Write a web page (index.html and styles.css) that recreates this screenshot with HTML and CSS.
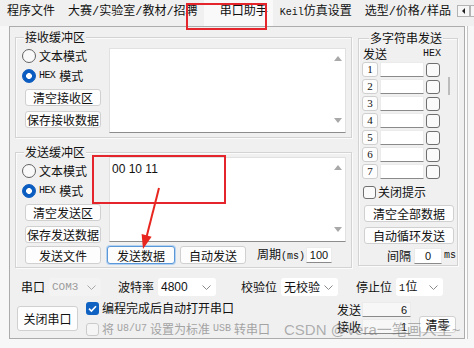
FILE: index.html
```html
<!DOCTYPE html>
<html lang="zh-CN">
  <head>
    <meta charset="UTF-8" />
    <meta name="viewport" content="width=device-width, initial-scale=1.0" />
    <title>串口助手</title>
    <link rel="stylesheet" href="styles.css">
  </head>
  <body>
    <div class="tabs">
      <span class="tab">程序文件</span>
      <span class="tab">大赛/实验室/教材/招聘</span>
      <span class="tab tab--active">串口助手</span>
      <span class="tab"><span class="lat">Keil</span>仿真设置</span>
      <span class="tab">选型/价格/样品</span>
      <span class="tab-scroll">
        <span class="tab-scroll__btn"><i class="tri tri--left"></i></span>
        <span class="tab-scroll__btn"><i class="tri tri--right"></i></span>
      </span>
    </div>

    <div class="panel">
      <div class="main">
        <div class="buffers">
          <!-- receive buffer -->
          <div class="group buffer">
            <div class="buffer__body">
              <div class="buffer__side">
                <span class="group__title">接收缓冲区</span>
                <label class="radio"><span class="radio__dot"></span>文本模式</label>
                <label class="radio radio--on"><span class="radio__dot"></span><span class="lat lat--tight">HEX</span>模式</label>
                <button class="btn btn--side">清空接收区</button>
                <button class="btn btn--side btn--gap">保存接收数据</button>
              </div>
              <div class="textbox textbox--recv">
                <div class="textbox__text"></div>
                <div class="vbar"><i class="tri tri--up"></i><i class="tri tri--down"></i></div>
              </div>
            </div>
          </div>

          <!-- send buffer -->
          <div class="group buffer buffer--send">
            <div class="buffer__body">
              <div class="buffer__side">
                <span class="group__title">发送缓冲区</span>
                <label class="radio"><span class="radio__dot"></span>文本模式</label>
                <label class="radio radio--on"><span class="radio__dot"></span><span class="lat lat--tight">HEX</span>模式</label>
                <button class="btn btn--side">清空发送区</button>
                <button class="btn btn--side btn--gap">保存发送数据</button>
              </div>
              <div class="textbox textbox--send">
                <div class="textbox__text">00 10 11</div>
                <div class="vbar"><i class="tri tri--up"></i><i class="tri tri--down"></i></div>
              </div>
            </div>
            <div class="send-row">
              <button class="btn btn--file">发送文件</button>
              <button class="btn btn--data">发送数据</button>
              <button class="btn btn--auto">自动发送</button>
              <span class="period">周期<span class="lat">(ms)</span></span>
              <span class="field field--period">100</span>
            </div>
          </div>
        </div>

        <!-- multi string -->
        <div class="group multi">
          <span class="group__title">多字符串发送</span>
          <div class="multi-head"><span>发送</span><span class="lat">HEX</span></div>
          <div class="multi-list">
            <div class="multi-rows">
              <div class="multi-row"><span class="num">1</span><span class="field field--str"></span><span class="check"></span></div>
              <div class="multi-row"><span class="num">2</span><span class="field field--str"></span><span class="check"></span></div>
              <div class="multi-row"><span class="num">3</span><span class="field field--str"></span><span class="check"></span></div>
              <div class="multi-row"><span class="num">4</span><span class="field field--str"></span><span class="check"></span></div>
              <div class="multi-row"><span class="num">5</span><span class="field field--str"></span><span class="check"></span></div>
              <div class="multi-row"><span class="num">6</span><span class="field field--str"></span><span class="check"></span></div>
              <div class="multi-row"><span class="num">7</span><span class="field field--str"></span><span class="check"></span></div>
            </div>
            <div class="vscroll"><span class="vscroll__thumb"></span></div>
          </div>
          <label class="checkline"><span class="check check--small"></span>关闭提示</label>
          <button class="btn btn--wide">清空全部数据</button>
          <button class="btn btn--wide">自动循环发送</button>
          <div class="interval">
            <span>间隔</span>
            <span class="field field--interval">0</span>
            <span class="lat">ms</span>
          </div>
        </div>
      </div>

      <div class="serial">
        <div class="serial-row">
          <div class="pair">
            <span>串口</span>
            <span class="select select--off select--com"><span class="mono">COM3</span>
              <svg width="9" height="5" viewBox="0 0 9 5"><path d="M.5.5l4 4 4-4" stroke="#a8a8a8" fill="none"/></svg></span>
          </div>
          <div class="pair">
            <span>波特率</span>
            <span class="select select--baud"><span class="num-text">4800</span>
              <svg width="9" height="5" viewBox="0 0 9 5"><path d="M.5.5l4 4 4-4" stroke="#8a8a8a" fill="none"/></svg></span>
          </div>
          <div class="pair">
            <span>校验位</span>
            <span class="select select--parity">无校验
              <svg width="9" height="5" viewBox="0 0 9 5"><path d="M.5.5l4 4 4-4" stroke="#8a8a8a" fill="none"/></svg></span>
          </div>
          <div class="pair">
            <span>停止位</span>
            <span class="select select--stop"><span><span class="lat lat--tight">1</span>位</span>
              <svg width="9" height="5" viewBox="0 0 9 5"><path d="M.5.5l4 4 4-4" stroke="#8a8a8a" fill="none"/></svg></span>
          </div>
        </div>

        <div class="serial-ctl">
          <button class="btn btn--port">关闭串口</button>
          <div class="checks">
            <label class="checkline2">
              <span class="check check--on">
                <svg width="13" height="13" viewBox="0 0 13 13"><path d="M3 6.6l2.4 2.4L10 4.2" stroke="#fff" stroke-width="1.6" fill="none"/></svg>
              </span>编程完成后自动打开串口
            </label>
            <label class="checkline2 muted">
              <span class="check check--off"></span>将<span class="lat">U8/U7</span>设置为标准<span class="lat">USB</span>转串口
            </label>
          </div>
          <div class="counters">
            <span>发送</span><span class="field field--count">6</span>
            <span>接收</span><span class="field field--count">1</span>
          </div>
          <button class="btn btn--clear">清零</button>
        </div>
      </div>
    </div>

    <div class="watermark">CSDN @Vera一笔画人生~</div>

    <div class="callout callout--tab"></div>
    <div class="callout callout--send"></div>
    <svg class="arrow" width="474" height="348" viewBox="0 0 474 348">
      <line x1="159" y1="188" x2="146.5" y2="237" stroke="#e8261f" stroke-width="2" />
      <polygon points="143,249 141.6,234 151.6,236.8" fill="#e8261f" />
    </svg>
  </body>
</html>
```

FILE: styles.css
```css
* {
  box-sizing: border-box;
}

body {
  position: relative;
  width: 474px;
  height: 348px;
  margin: 0;
  overflow: hidden;
  background: #f7f7f7;
  color: #111;
  font-family: "Noto Sans CJK SC", sans-serif;
  font-size: 12px;
  line-height: 16px;
}

.lat {
  font-family: "Liberation Mono", monospace;
  font-size: 10px;
}

.lat--tight {
  letter-spacing: -0.6px;
  margin-right: 1px;
}

/* tabs */
.tabs {
  display: flex;
  height: 26px;
  background: #f0f0f0;
  font-family: "Liberation Mono", "Noto Sans CJK SC", monospace;
}

.tab {
  height: 24px;
  padding: 0 6px 0 7px;
  line-height: 24px;
  white-space: nowrap;
}

.tab--active {
  height: 26px;
  padding-left: 16px;
  padding-right: 5px;
  background: #f9f9f9;
}

.tab-scroll {
  display: flex;
  margin: 5px 7px 0 auto;
}

.tab-scroll__btn {
  display: flex;
  align-items: center;
  justify-content: center;
  width: 13px;
  height: 12px;
  border: 1px solid #b4b4b4;
  background: #f6f6f6;
}

.tri {
  display: block;
  width: 0;
  height: 0;
}

.tri--left {
  border-top: 3px solid transparent;
  border-bottom: 3px solid transparent;
  border-right: 3px solid #222;
}

.tri--right {
  border-top: 3px solid transparent;
  border-bottom: 3px solid transparent;
  border-left: 3px solid #222;
}

.tri--up {
  border-left: 4px solid transparent;
  border-right: 4px solid transparent;
  border-bottom: 5px solid #a9a9a9;
}

.tri--down {
  border-left: 4px solid transparent;
  border-right: 4px solid transparent;
  border-top: 5px solid #a9a9a9;
}

/* panel */
.panel {
  width: 456px;
  height: 313px;
  margin-left: 9px;
  border: 1px solid #acacac;
  background: #f0f0f0;
  box-shadow: 2px 0 0 #fcfcfc, 3px 0 0 #c8c8c8;
}

.main {
  display: grid;
  grid-template-columns: 337px 100px;
  column-gap: 6px;
  align-items: start;
  padding: 10px 0 0 5px;
}

.group {
  border: 1px solid #d3d3d3;
  box-shadow: inset 1px 1px 0 #fbfbfb, 1px 1px 0 #fbfbfb;
}

.group__title {
  align-self: flex-start;
  margin-top: -9px;
  padding: 0 1px;
  background: #f0f0f0;
  line-height: 16px;
  white-space: nowrap;
}

/* buffers */
.buffer {
  padding: 0 5px 4px 6px;
}

.buffer--send {
  margin-top: 14px;
  padding-bottom: 3px;
}

.buffer__body {
  display: flex;
  align-items: flex-start;
  gap: 7px;
}

.buffer__side {
  display: flex;
  flex-direction: column;
  align-items: flex-start;
  width: 80px;
}

.buffer__side .group__title {
  margin-left: 2px;
}

.radio {
  display: flex;
  align-items: center;
  gap: 3px;
  height: 20px;
}

.group__title + .radio {
  margin-top: 1px;
}

.radio__dot {
  width: 14px;
  height: 14px;
  border: 1px solid #626262;
  border-radius: 50%;
  background: #f9f9f9;
}

.radio--on .radio__dot {
  border-color: #0b5cc0;
  background: radial-gradient(circle, #fff 0 2.6px, #0b5cc0 3.2px);
}

.btn {
  height: 17px;
  padding: 0;
  border: 1px solid #d0d0d0;
  border-radius: 3px;
  background: #fdfdfd;
  color: #111;
  font: inherit;
  line-height: 15px;
  text-align: center;
  white-space: nowrap;
}

.btn--side {
  width: 76px;
  margin: 3px 0 0 3px;
}

.btn--gap {
  margin-top: 5px;
}

.textbox {
  display: flex;
  width: 237px;
  height: 85px;
  border: 1px solid #e1e1e1;
  border-bottom-color: #8c8c8c;
  background: #fff;
}

.textbox--recv {
  margin-top: 10px;
}

.textbox--send {
  margin-top: 4px;
}

.textbox__text {
  flex: 1;
  padding: 3px 0 0 2px;
  font-family: "Liberation Sans", sans-serif;
  white-space: pre;
}

.vbar {
  display: flex;
  flex-direction: column;
  align-items: center;
  justify-content: space-between;
  width: 14px;
  padding: 7px 0 9px;
}

.send-row {
  display: flex;
  align-items: center;
  height: 18px;
  margin: 3px 0 0 3px;
}

.send-row .btn {
  height: 18px;
}

.btn--file {
  width: 76px;
}

.btn--data {
  width: 68px;
  margin-left: 6px;
  border-color: #5a97d8;
  box-shadow: 0 0 0 1px #b5d2f0;
}

.btn--auto {
  width: 66px;
  margin-left: 5px;
}

.period {
  margin-left: 11px;
}

.field {
  display: inline-block;
  height: 16px;
  border: 1px solid #ebebeb;
  border-bottom-color: #8a8a8a;
  background: #fff;
  font-family: "Liberation Sans", sans-serif;
  font-size: 11px;
  line-height: 14px;
  text-align: center;
}

.field--period {
  width: 26px;
  margin-left: 1px;
}

/* multi string */
.multi {
  display: flex;
  flex-direction: column;
  align-items: flex-start;
  margin-top: 1px;
  padding: 0 1px 1px 3px;
}

.multi .group__title {
  margin-left: 7px;
}

.multi-head {
  display: flex;
  justify-content: space-between;
  width: 79px;
  height: 15px;
  padding-left: 1px;
  line-height: 15px;
}

.multi-list {
  display: flex;
  margin-top: 1px;
}

.multi-rows {
  display: flex;
  flex-direction: column;
  gap: 2px;
}

.multi-row {
  display: flex;
  align-items: center;
  gap: 2px;
  height: 15px;
}

.num {
  width: 16px;
  height: 15px;
  border: 1px solid #cfcfcf;
  border-radius: 3px;
  background: #fdfdfd;
  font-family: "Liberation Serif", serif;
  font-size: 11px;
  line-height: 13px;
  text-align: center;
}

.field--str {
  width: 44px;
  height: 15px;
}

.check {
  width: 14px;
  height: 14px;
  border: 1px solid #6f6f6f;
  border-radius: 3px;
  background: #fafafa;
}

.vscroll {
  width: 2px;
  margin-left: 8px;
  padding-top: 15px;
}

.vscroll__thumb {
  display: block;
  width: 2px;
  height: 18px;
  background: #bcbcbc;
}

.checkline {
  display: flex;
  align-items: center;
  gap: 2px;
  height: 16px;
  margin: 5px 0 0 1px;
}

.check--small {
  width: 13px;
  height: 13px;
}

.btn--wide {
  width: 90px;
  margin: 5px 0 0 2px;
}

.interval {
  display: flex;
  align-items: center;
  align-self: flex-end;
  height: 16px;
  margin-top: 4px;
}

.field--interval {
  width: 28px;
  margin: 0 2px 0 3px;
}

/* serial settings */
.serial-row {
  display: grid;
  grid-template-columns: 97px 123px 115px auto;
  height: 18px;
  margin: 10px 0 0 11px;
}

.pair {
  display: flex;
  align-items: center;
  gap: 4px;
}

.select {
  display: flex;
  align-items: center;
  justify-content: space-between;
  height: 18px;
  padding: 0 5px 0 3px;
  border-radius: 3px;
  background: #fff;
}

.select--off {
  background: #f3f3f3;
  color: #9b9b9b;
}

.select--com {
  width: 52px;
}

.select--baud {
  width: 58px;
}

.select--parity {
  width: 57px;
}

.select--stop {
  width: 47px;
}

.mono {
  font-family: "Liberation Mono", monospace;
  font-size: 11px;
}

.num-text {
  font-family: "Liberation Sans", sans-serif;
  font-size: 12px;
}

.serial-ctl {
  display: flex;
  height: 37px;
  margin: 4px 0 0 7px;
}

.btn--port {
  align-self: center;
  width: 61px;
  height: 25px;
  margin-right: 8px;
  line-height: 23px;
}

.checks {
  display: flex;
  flex-direction: column;
  gap: 5px;
  width: 251px;
}

.checkline2 {
  display: flex;
  align-items: center;
  gap: 3px;
  height: 16px;
  white-space: nowrap;
}

.check--on {
  width: 13px;
  height: 13px;
  border: none;
  background: #0f62c2;
}

.check--on svg {
  display: block;
}

.check--off {
  width: 13px;
  height: 13px;
  border-color: #cbcbcb;
  background: #f5f5f5;
}

.muted {
  color: #a3a3a3;
}

.counters {
  display: grid;
  grid-template-columns: 24px 49px;
  align-self: flex-start;
  column-gap: 1px;
  margin-top: 1px;
  line-height: 17px;
}

.field--count {
  height: 15px;
  margin-top: 1px;
  padding-right: 3px;
  background: #f7f7f7;
  text-align: right;
}

.btn--clear {
  align-self: flex-end;
  width: 37px;
  margin: 0 0 4px 8px;
}

/* overlays */
.watermark {
  position: absolute;
  left: 284px;
  top: 321px;
  color: rgba(115, 115, 115, 0.55);
  font-family: "Liberation Sans", "Noto Sans CJK SC", sans-serif;
  font-size: 15px;
  line-height: 18px;
  white-space: nowrap;
  pointer-events: none;
}

.callout {
  position: absolute;
  border: 2px solid #e4252b;
  pointer-events: none;
}

.callout--tab {
  left: 186px;
  top: 3px;
  width: 81px;
  height: 27px;
}

.callout--send {
  left: 92px;
  top: 155px;
  width: 134px;
  height: 49px;
}

.arrow {
  position: absolute;
  left: 0;
  top: 0;
  pointer-events: none;
}
```
